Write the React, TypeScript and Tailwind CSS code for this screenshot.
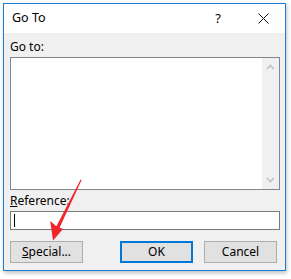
import React from 'react';

const font = { fontFamily: '"Noto Sans", "Segoe UI", Arial, sans-serif' };

const Chevron = ({ down }: { down?: boolean }) => (
  <svg width="9" height="6" viewBox="0 0 9 6" className={down ? 'rotate-180' : ''}>
    <path d="M1 5 L4.5 1.5 L8 5" fill="none" stroke="#c1c1c1" strokeWidth="1.6" />
  </svg>
);

const App: React.FC = () => {
  return (
    <div className="relative w-[291px] h-[279px] bg-white pl-[3px] pt-[3px] text-black" style={font}>
      {/* Dialog window */}
      <div className="w-[283px] h-[268px] border border-[#1a7fd4] bg-[#f0f0f0] flex flex-col shadow-[1px_2px_4px_rgba(0,0,0,0.25)]">
        {/* Title bar */}
        <div className="h-[29px] bg-white flex items-center shrink-0">
          <span className="pl-[8px] text-[12.5px]">Go To</span>
          <div className="ml-auto flex h-full">
            <div className="w-[46px] flex items-center justify-center text-[13px]">?</div>
            <div className="w-[44px] flex items-center justify-center">
              <svg width="11" height="11" viewBox="0 0 11 11">
                <path d="M0.5 0.5 L10.5 10.5 M10.5 0.5 L0.5 10.5" stroke="#111" strokeWidth="1" />
              </svg>
            </div>
          </div>
        </div>

        {/* Body */}
        <div className="flex-1 pl-[6px] pr-[4px] pt-[4px] text-[12px]">
          <div className="h-[20px] flex items-center">Go to:</div>
          <div className="h-[133px] w-[270px] border border-[#828790] bg-white flex justify-end">
            <div className="w-[17px] h-full bg-[#f0f0f0] flex flex-col items-center justify-between py-[6px]">
              <Chevron />
              <Chevron down />
            </div>
          </div>

          <div className="h-[21px] flex items-center">
            <span><span className="underline">R</span>eference:</span>
          </div>
          <div className="h-[19px] w-[270px] border border-[#7a7a7a] bg-white flex items-center pl-[3px]">
            <div className="w-px h-[13px] bg-black" />
          </div>

          <div className="mt-[11px] flex">
            <button className="w-[73px] h-[22px] border border-[#adadad] bg-[#e1e1e1] flex items-center justify-center">
              <span><span className="underline">S</span>pecial...</span>
            </button>
            <button className="ml-[37px] w-[73px] h-[22px] border-2 border-[#0078d7] bg-[#e1e1e1] flex items-center justify-center">
              OK
            </button>
            <button className="ml-[11px] w-[73px] h-[22px] border border-[#adadad] bg-[#e1e1e1] flex items-center justify-center">
              Cancel
            </button>
          </div>
        </div>
      </div>

      {/* Red annotation arrow */}
      <svg className="absolute left-0 top-0 pointer-events-none" width="291" height="279" viewBox="0 0 291 279">
        <path d="M80.6 179.5 L81.6 180 L59 229 L55.8 227.6 Z" fill="#f0252b" />
        <path d="M53 240.5 L50.2 221 L56 226 L63 229 Z" fill="#f0252b" />
      </svg>
    </div>
  );
};

export default App;
